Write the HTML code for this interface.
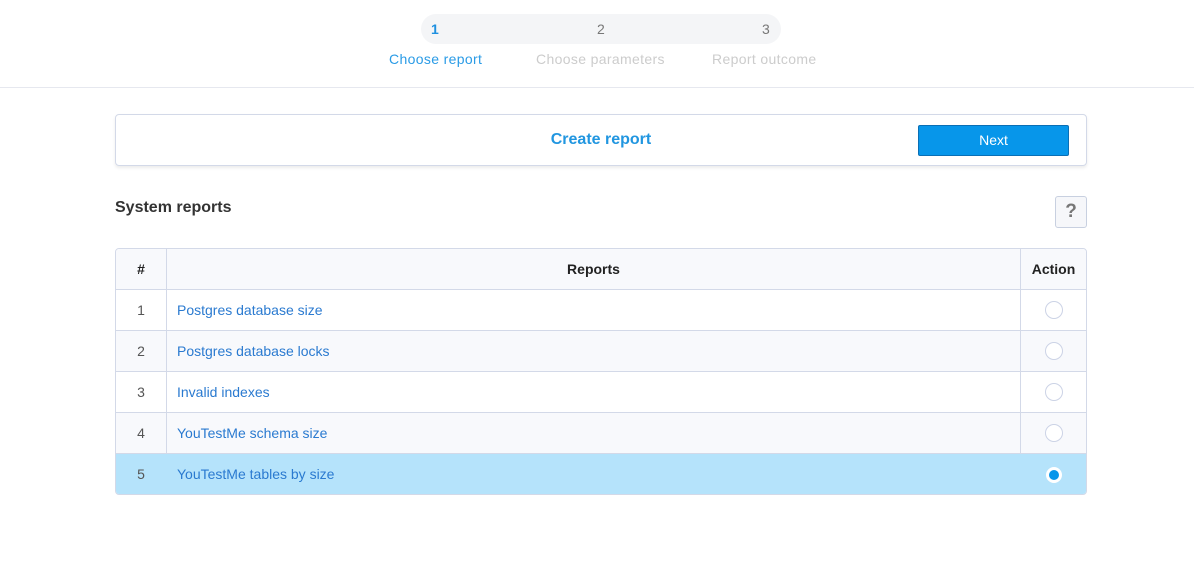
<!DOCTYPE html>
<html><head><style>
*{box-sizing:border-box;margin:0;padding:0}
body{width:1194px;height:569px;background:#fff;font-family:"Liberation Sans",sans-serif;position:relative;overflow:hidden}
.top{position:absolute;left:0;top:0;width:1194px;height:88px;border-bottom:1px solid #e6e8ef}
.pill{position:absolute;left:421px;top:14px;width:360px;height:30px;border-radius:15px;background:#f4f5f7}
.n{position:absolute;top:21px;font-size:14px;color:#777}
.l{position:absolute;top:51px;font-size:14px;color:#ccc;letter-spacing:0.35px}
.card{position:absolute;left:115px;top:114px;width:972px;height:52px;border:1px solid #d3d9e8;border-radius:4px;box-shadow:0 2px 3px rgba(0,0,0,.08)}
.card .t{position:absolute;left:0;width:970px;top:16px;text-align:center;font-size:16px;font-weight:bold;color:#2196e0}
.btn{position:absolute;left:802px;top:10px;width:151px;height:31px;background:#0796ea;border:1px solid #0a6fb5;border-radius:2px;color:#fff;font-size:14px;text-align:center;line-height:29px}
h2{position:absolute;left:115px;top:199px;font-size:16px;color:#333}
.q{position:absolute;left:1055px;top:196px;width:32px;height:32px;border:1px solid #c8d0e0;border-radius:3px;background:#f6f7fa;color:#777;font-weight:bold;font-size:19px;text-align:center;line-height:30px}
table{position:absolute;left:115px;top:248px;width:972px;border-collapse:separate;border-spacing:0;border:1px solid #d3d9e8;border-radius:4px;overflow:hidden;font-size:14px}
td,th{height:41px;border-bottom:1px solid #d3d9e8;border-right:1px solid #d3d9e8}
tr:last-child td{border-bottom:none;height:40px}
td:last-child,th:last-child{border-right:none}
th{background:#f8f9fc;color:#222;font-size:14px}
td.c{text-align:center;color:#555;width:51px}
td.r{color:#2a7ad0;padding-left:10px}
td.a{width:65px;text-align:center}
tr.alt td{background:#f8f9fc}
tr.sel td{background:#b5e3fb;border-right-color:#b5e3fb}
.rd{display:inline-block;width:18px;height:18px;border:1px solid #ccd3e6;border-radius:50%;background:#fff;vertical-align:middle}
.rd.on{border:3px solid #fff;background:#0796ea;width:16px;height:16px}
</style></head><body>
<div class="top">
<div class="pill"></div>
<div class="n" style="left:431px;color:#1e90e0;font-weight:bold">1</div>
<div class="n" style="left:597px">2</div>
<div class="n" style="left:762px">3</div>
<div class="l" style="left:389px;color:#2a9be6">Choose report</div>
<div class="l" style="left:536px">Choose parameters</div>
<div class="l" style="left:712px">Report outcome</div>
</div>
<div class="card"><div class="t">Create report</div><div class="btn">Next</div></div>
<h2>System reports</h2>
<div class="q">?</div>
<table>
<tr><th style="width:51px">#</th><th>Reports</th><th style="width:65px">Action</th></tr>
<tr><td class="c">1</td><td class="r">Postgres database size</td><td class="a"><span class="rd"></span></td></tr>
<tr class="alt"><td class="c">2</td><td class="r">Postgres database locks</td><td class="a"><span class="rd"></span></td></tr>
<tr><td class="c">3</td><td class="r">Invalid indexes</td><td class="a"><span class="rd"></span></td></tr>
<tr class="alt"><td class="c">4</td><td class="r">YouTestMe schema size</td><td class="a"><span class="rd"></span></td></tr>
<tr class="sel"><td class="c">5</td><td class="r">YouTestMe tables by size</td><td class="a"><span class="rd on"></span></td></tr>
</table>
</body></html>
